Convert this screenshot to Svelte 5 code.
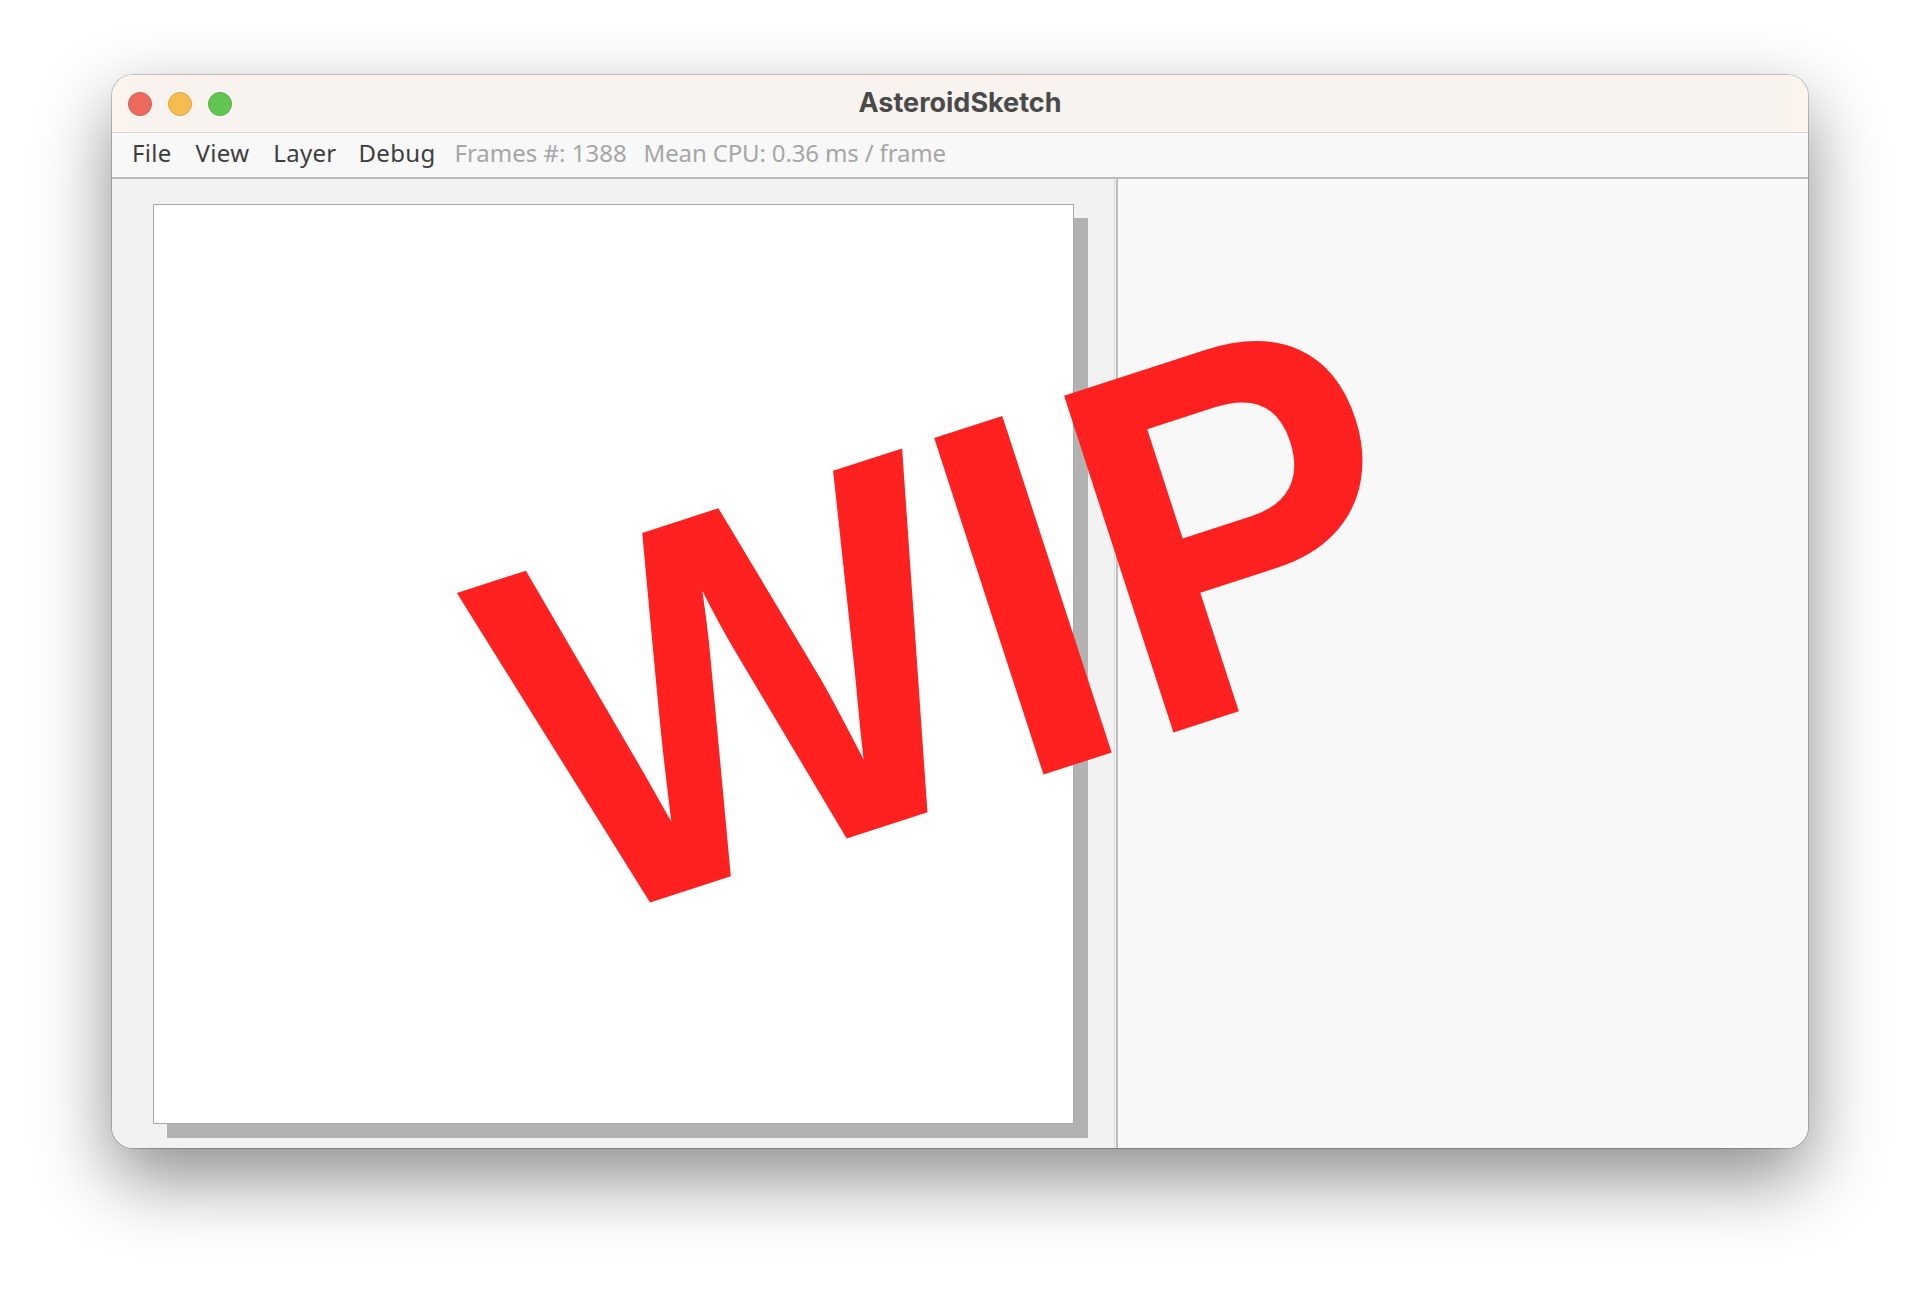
<script lang="ts">
  const menus = ['File', 'View', 'Layer', 'Debug']
  let frames = $state(1388)
  let cpu = $state(0.36)
</script>

<div class="page">
  <div class="window">
    <header class="titlebar">
      <div class="lights">
        <span class="light red"></span>
        <span class="light yellow"></span>
        <span class="light green"></span>
      </div>
      <div class="title">AsteroidSketch</div>
    </header>

    <nav class="menubar">
      {#each menus as m}
        <span class="menu">{m}</span>
      {/each}
      <span class="stat first">Frames #: {frames}</span>
      <span class="stat">Mean CPU: {cpu} ms / frame</span>
    </nav>

    <main class="panes">
      <section class="left">
        <div class="sheet"></div>
      </section>
      <div class="divider"></div>
      <section class="right"></section>
    </main>

    <div class="wip">WI<span class="p">P</span></div>
  </div>
</div>

<style>
  :global(body) {
    margin: 0;
    background: #fff;
  }
  .page {
    box-sizing: border-box;
    height: 1296px;
    padding: 75px 112px 0;
    overflow: hidden;
  }
  .window {
    position: relative;
    box-sizing: border-box;
    height: 1073px;
    display: flex;
    flex-direction: column;
    border-radius: 21px;
    box-shadow: 0 0 0 1px rgba(0, 0, 0, 0.2), 0 30px 75px 0 rgba(0, 0, 0, 0.46);
    font-family: "Noto Sans", sans-serif;
  }
  .titlebar {
    position: relative;
    flex: none;
    height: 58px;
    display: flex;
    align-items: center;
    background: linear-gradient(90deg, #fdf4ee 0, #f8f3ee 30px, #f8f3ee calc(100% - 30px), #fdf4ee 100%);
    border-bottom: 1px solid #d6d6d6;
    border-radius: 21px 21px 0 0;
    box-sizing: border-box;
  }
  .lights {
    display: flex;
    gap: 16px;
    padding-left: 16px;
  }
  .light {
    box-sizing: border-box;
    width: 24px;
    height: 24px;
    border-radius: 50%;
    border: 1px solid;
  }
  .red { background: #ee6a5f; border-color: #d6594e; }
  .yellow { background: #f5bd4f; border-color: #dca13f; }
  .green { background: #61c554; border-color: #52b047; }
  .title {
    position: absolute;
    left: 0;
    right: 0;
    padding-bottom: 2px;
    text-align: center;
    font: 700 27px "Inter", sans-serif;
    color: #4a4a4a;
  }
  .menubar {
    flex: none;
    box-sizing: border-box;
    height: 46px;
    display: flex;
    align-items: center;
    padding: 0 0 5px 20px;
    gap: 24px;
    background: #f8f8f8;
    border-bottom: 2px solid #bcbcbc;
    font-size: 24px;
    color: #3e3e3e;
  }
  .menu {
    letter-spacing: 0.3px;
  }
  .menu:nth-child(4) {
    margin-left: -2px;
  }
  .stat {
    color: #a6a6a6;
    margin-left: -7px;
    letter-spacing: -0.15px;
  }
  .stat.first {
    margin-left: -5px;
    letter-spacing: 0;
  }
  .panes {
    flex: 1;
    min-height: 0;
    display: flex;
  }
  .left {
    box-sizing: border-box;
    width: 1002px;
    padding: 25px 0 0 41px;
    background: #f2f2f2;
    border-bottom-left-radius: 21px;
  }
  .sheet {
    box-sizing: border-box;
    width: 921px;
    height: 920px;
    background: #fff;
    border: 1px solid #a8a8a8;
    box-shadow: 14px 14px 0 #b2b2b2;
  }
  .divider {
    flex: none;
    width: 4px;
    background: linear-gradient(90deg, #dcdcdc 0 1px, #f2f2f2 1px 2px, #bdbdbd 2px 4px);
  }
  .right {
    flex: 1;
    background: #f8f8f8;
    border-bottom-right-radius: 21px;
  }
  .wip {
    position: absolute;
    left: 845px;
    top: 540px;
    font: 700 497px/1 "Liberation Sans", sans-serif;
    color: #ff2020;
    white-space: nowrap;
    transform: translate(-50%, -50%) rotate(-18deg) scale(1, 1.035);
    pointer-events: none;
  }
  .p {
    display: inline-block;
    transform: scaleX(0.96);
    transform-origin: left center;
  }
</style>
